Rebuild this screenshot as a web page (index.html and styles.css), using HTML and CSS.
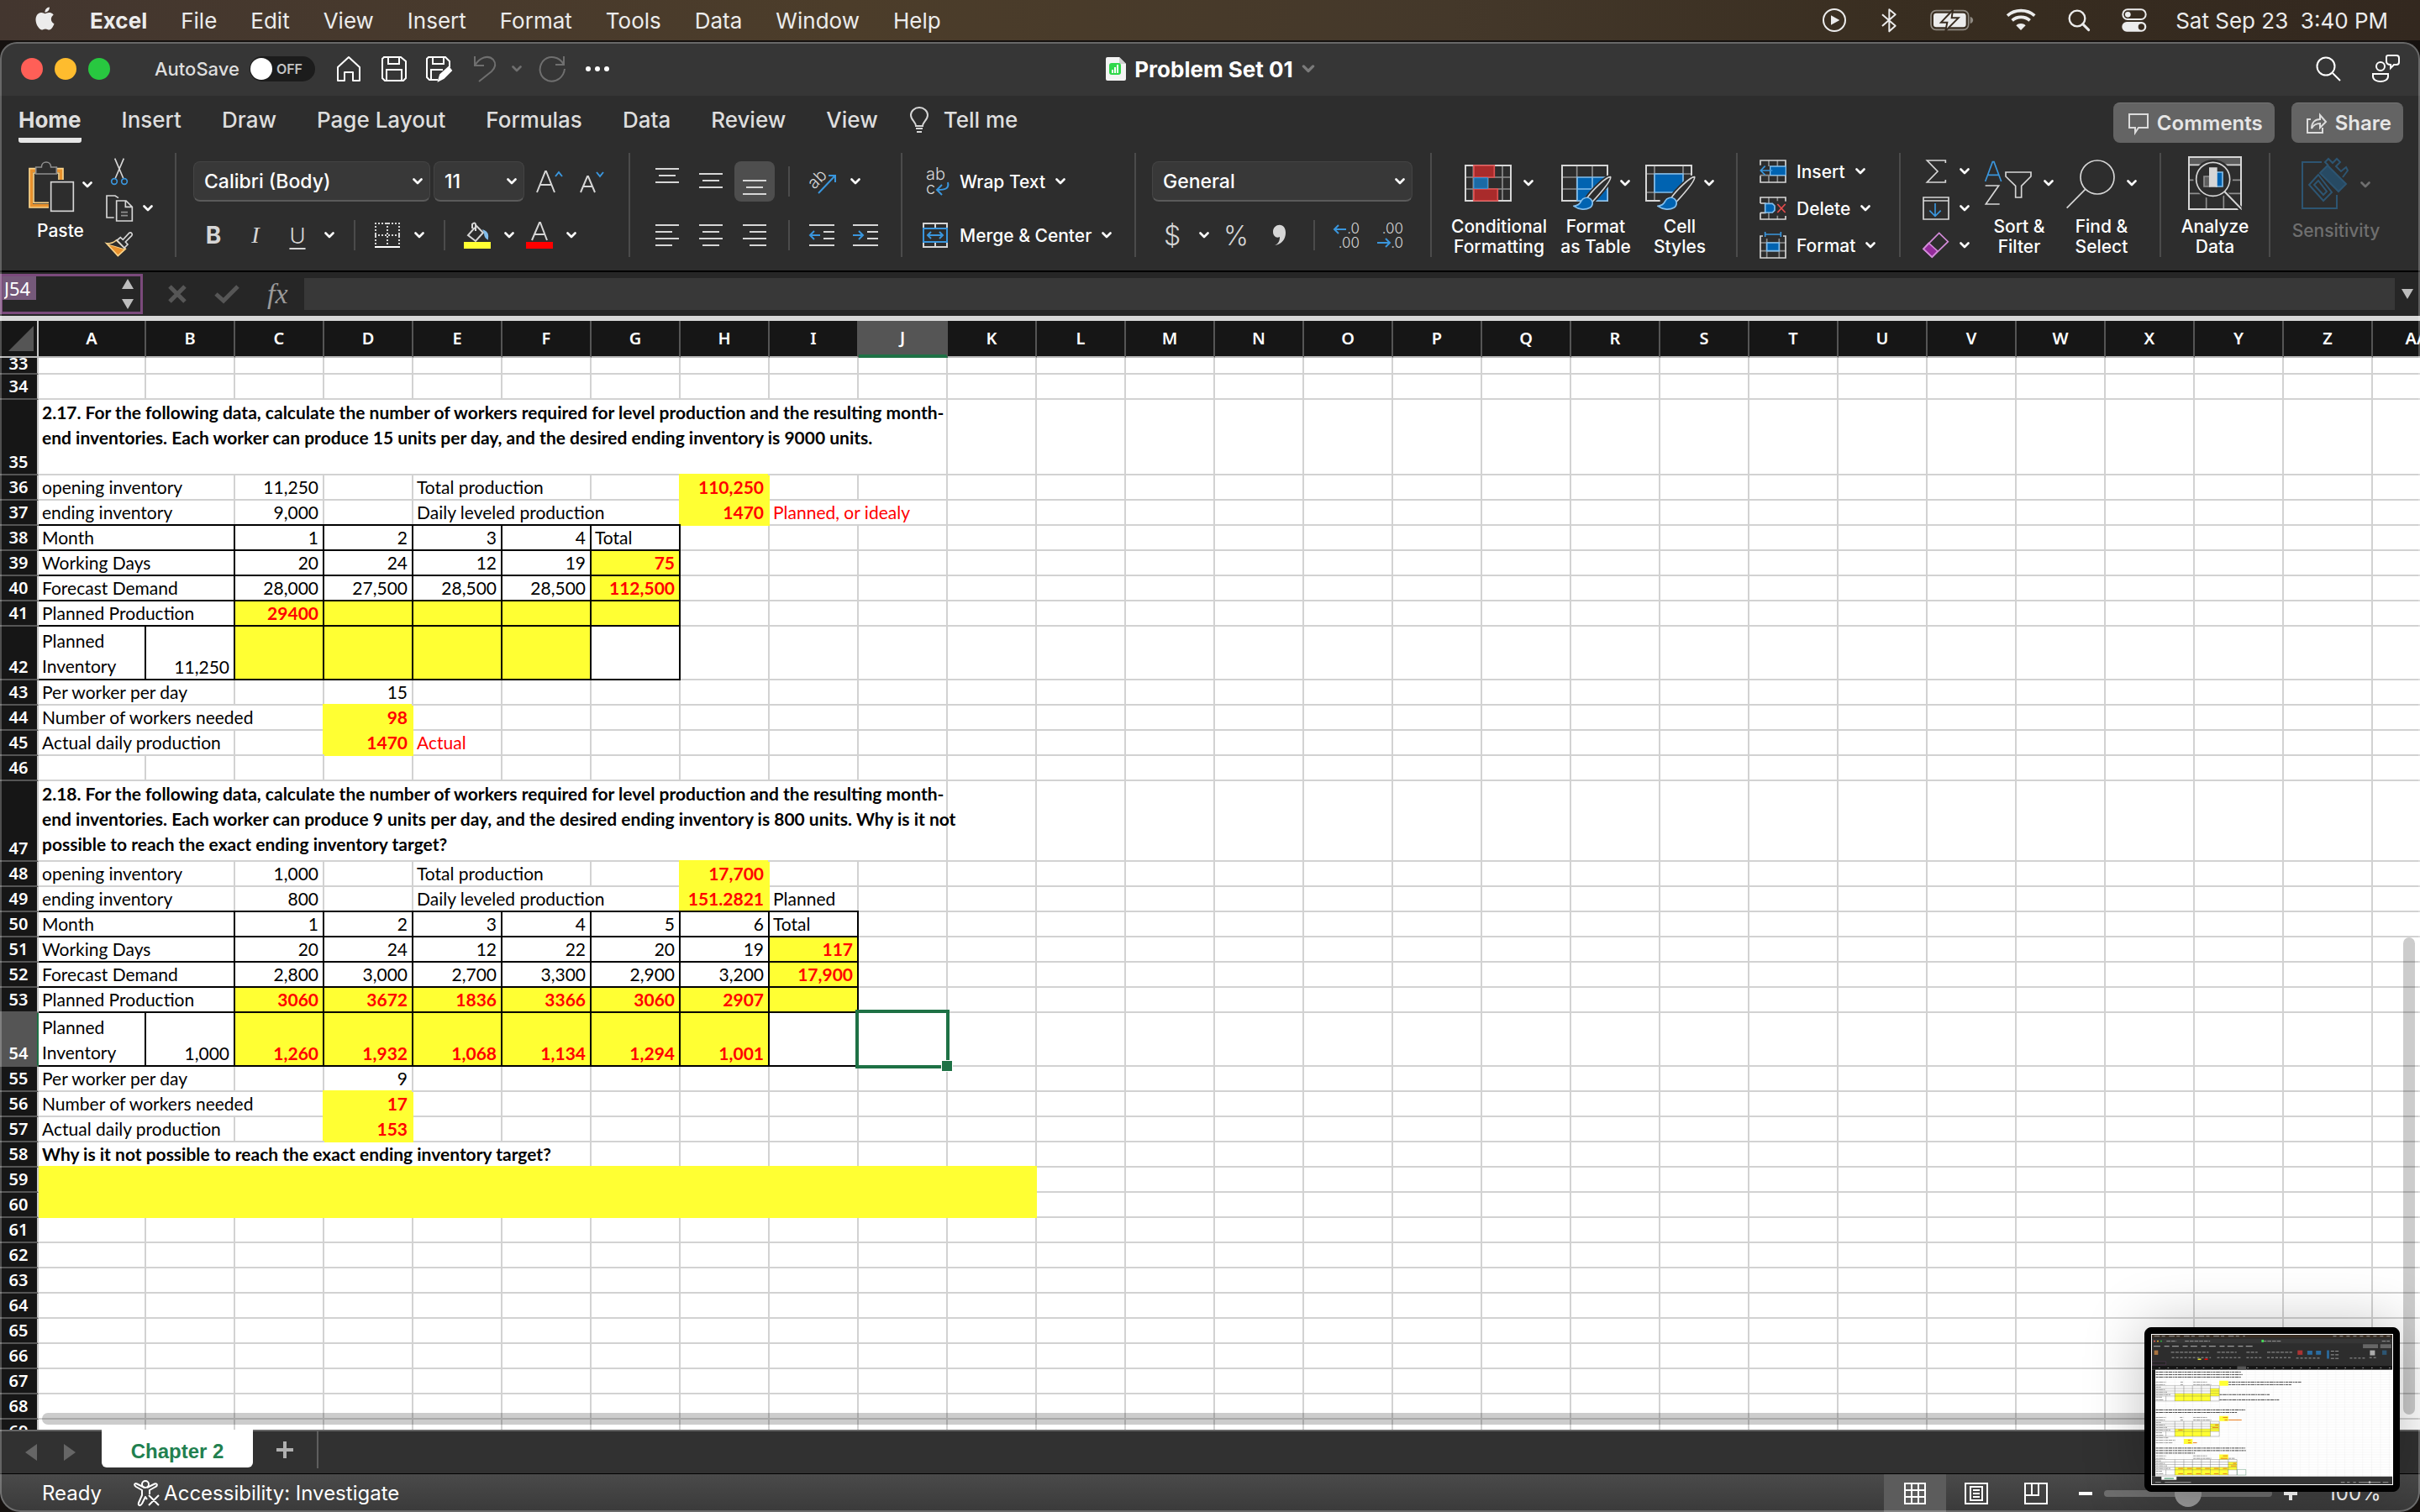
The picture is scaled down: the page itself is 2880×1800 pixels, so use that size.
FILE: index.html
```html
<!DOCTYPE html>
<html lang="en">
<head>
    <meta charset="UTF-8">
    <meta name="viewport" content="width=device-width, initial-scale=1.0">
    <title>Problem Set 01</title>
    <link rel="stylesheet" href="styles.css">
</head>
<body>
    <svg class="defs" aria-hidden="true">
        <symbol id="chev" viewBox="0 0 12 8"><path d="M1.5 1.5 6 6 10.500 1.500" fill="none" stroke="currentColor" stroke-width="2.600" stroke-linecap="round" stroke-linejoin="round"/></symbol>
        <symbol id="brush" viewBox="456 90 140 130">
            <path d="M590 98c-14-2-66 48-84 76l18 14c22-24 70-76 66-90z" fill="#2d2d2d" stroke="#2d2d2d" stroke-width="16"/>
            <path d="M590 98c-14-2-66 48-84 76l18 14c22-24 70-76 66-90z" fill="#2d2d2d" stroke="#d6d6d6" stroke-width="5"/>
            <path d="M459 202c14-2 22-8 26-18 6-12 22-16 33-8 11 9 10 24-2 32-14 8-38 8-57-6z" fill="#0063b1" stroke="#83beec" stroke-width="5"/>
        </symbol>
    </svg>

    <!-- macOS menu bar -->
    <header class="menubar">
        <nav class="menus">
            <a href="#" aria-label="Apple"><svg class="apple" viewBox="0 0 24 24" fill="#ececec"><path d="M12.152 6.896c-.948 0-2.415-1.078-3.96-1.040-2.040.027-3.910 1.183-4.961 3.014-2.117 3.675-.546 9.103 1.519 12.090 1.013 1.454 2.208 3.090 3.792 3.039 1.520-.065 2.090-.987 3.935-.987 1.831 0 2.350.987 3.960.948 1.637-.026 2.676-1.480 3.676-2.948 1.156-1.688 1.636-3.325 1.662-3.415-.039-.013-3.182-1.221-3.220-4.857-.026-3.040 2.480-4.494 2.597-4.559-1.429-2.090-3.623-2.324-4.390-2.376-2-.156-3.675 1.090-4.610 1.090zM15.530 3.830c.843-1.012 1.400-2.427 1.245-3.830-1.207.052-2.662.805-3.532 1.818-.780.896-1.454 2.338-1.273 3.714 1.338.104 2.715-.688 3.559-1.701"/></svg></a>
            <a href="#" class="app">Excel</a>
            <a href="#">File</a>
            <a href="#">Edit</a>
            <a href="#">View</a>
            <a href="#">Insert</a>
            <a href="#">Format</a>
            <a href="#">Tools</a>
            <a href="#">Data</a>
            <a href="#">Window</a>
            <a href="#">Help</a>
        </nav>
        <div class="tray">
            <svg width="28" height="28" viewBox="36 30 84 84"><circle cx="78" cy="72" r="39" fill="none" stroke="#ececec" stroke-width="6"/><path d="M66 55v34l31-17z" fill="#ececec"/></svg>
            <svg width="18" height="30" viewBox="247 27 54 90"><path d="M250 52l47 40-22 20V34l22 18-47 41" fill="none" stroke="#ececec" stroke-width="6" stroke-linejoin="round"/></svg>
            <svg width="52" height="26" viewBox="419 33 156 78"><rect x="422" y="38" width="134" height="68" rx="18" fill="none" stroke="#8f8a82" stroke-width="5"/><path d="M562 60c14 2 14 22 0 24z" fill="#8f8a82"/><rect x="431" y="47" width="116" height="50" rx="10" fill="#ececec"/><path d="M500 36l-42 44h22l-6 30 46-46h-24z" fill="#ececec" stroke="#382c20" stroke-width="6"/></svg>
            <svg width="36" height="28" viewBox="684 30 108 84" fill="none" stroke="#ececec" stroke-width="11"><path d="M690 56c27-24 70-24 97 0"/><path d="M707 73c17-16 46-16 63 0"/><path d="M738 108l-17-17c9-9 25-9 34 0z" fill="#ececec" stroke="none"/></svg>
            <svg width="26" height="26" viewBox="907 34 78 78" fill="none" stroke="#ececec" stroke-width="7"><circle cx="940" cy="67" r="28"/><path d="M960 87l21 21" stroke-width="9" stroke-linecap="round"/></svg>
            <svg width="30" height="28" viewBox="1102 28 90 84"><rect x="1106" y="32" width="82" height="35" rx="17" fill="none" stroke="#ececec" stroke-width="6"/><circle cx="1124" cy="50" r="10" fill="#ececec"/><rect x="1103" y="76" width="87" height="35" rx="17" fill="#ececec"/><circle cx="1172" cy="94" r="11" fill="#382c20"/></svg>
            <span class="clock">Sat Sep 23&nbsp; 3:40 PM</span>
        </div>
    </header>

    <main class="window">
        <div class="titlebar">
            <div class="title-left">
                <span class="light red"></span>
                <span class="light amber"></span>
                <span class="light green"></span>
                <label class="autosave">AutoSave
                    <span class="switch"><input type="checkbox"><span class="knob"></span>OFF</span>
                </label>
                <button aria-label="Home"><svg width="30" height="32" viewBox="0 0 30 32" fill="none" stroke="#fff" stroke-width="2"><path d="M2 14 15 2l13 12v16h-8V20H10v10H2z" stroke-linejoin="round"/></svg></button>
                <button aria-label="Save"><svg width="30" height="30" viewBox="0 0 30 30" fill="none" stroke="#fff" stroke-width="2"><path d="M3 1h20l6 5v20l-3 3H4l-3-3V3z"/><path d="M8 1v8h13V1M6 29V16h18v13"/></svg></button>
                <button aria-label="Save as"><svg width="31" height="30" viewBox="0 0 31 30" fill="none" stroke="#fff" stroke-width="2"><path d="M14 28H4l-3-3V3l2-2h20l5 5v7"/><path d="M8 1v8h13V1M6 28V16h14"/><path d="M15 29l2-7L27 13l3 4-9 9z" fill="#fff"/></svg></button>
                <button aria-label="Undo" class="off"><svg width="28" height="32" viewBox="0 0 28 32" fill="none" stroke="#6f6f6f" stroke-width="2"><path d="M2 1v11h11M2 12C8 2 18-1 24 5c4 5 2 10-2 14L7 31"/></svg></button>
                <button aria-label="Undo list" class="off narrow"><svg width="12" height="8"><use href="#chev"/></svg></button>
                <button aria-label="Redo" class="off"><svg width="32" height="32" viewBox="0 0 32 32" fill="none" stroke="#6f6f6f" stroke-width="2"><path d="M30 1v10H20M30 11C25 1 12-1 5 7-1 15 1 26 11 30c11 3 19-5 20-14"/></svg></button>
                <button aria-label="More"><svg width="28" height="6" viewBox="0 0 28 6" fill="#fff"><circle cx="3" cy="3" r="3"/><circle cx="14" cy="3" r="3"/><circle cx="25" cy="3" r="3"/></svg></button>
            </div>
            <h1 class="title">
                <svg width="24" height="28" viewBox="0 0 24 28"><path d="M2 0h14l8 8v18q0 2-2 2H2q-2 0-2-2V2q0-2 2-2z" fill="#f4f4f4"/><path d="M16 0l8 8h-8z" fill="#cfcfcf"/><rect x="4" y="7" width="14" height="14" rx="3" fill="#2fd84a"/><path d="M8 19v-4M11 19v-7M14 19V9" stroke="#fff" stroke-width="2"/></svg>
                Problem Set 01
                <svg class="dim" width="16" height="10"><use href="#chev"/></svg>
            </h1>
            <div class="title-right">
                <button aria-label="Search"><svg width="30" height="30" viewBox="0 0 30 30" fill="none" stroke="#fff" stroke-width="2"><circle cx="12" cy="12" r="10.500"/><path d="M20 20l9 9"/></svg></button>
                <button aria-label="Presence"><svg width="34" height="34" viewBox="0 0 34 34" fill="none" stroke="#fff" stroke-width="2"><circle cx="11" cy="14" r="5"/><path d="M2 23h18v3c0 8-18 8-18 0z"/><path d="M18 3q0-2 2-2h10q3 0 3 3v5q0 3-3 3h-3l-4 4v-4q-5 0-5-4z"/></svg></button>
            </div>
        </div>

        <div class="tabs">
            <nav>
                <a href="#" class="active">Home</a>
                <a href="#">Insert</a>
                <a href="#">Draw</a>
                <a href="#">Page Layout</a>
                <a href="#">Formulas</a>
                <a href="#">Data</a>
                <a href="#">Review</a>
                <a href="#">View</a>
                <a href="#" class="tell"><svg width="22" height="32" viewBox="0 0 22 32" fill="none" stroke="#d6d6d6" stroke-width="2"><path d="M7 23c0-5-6-7-6-13a10 9 0 0 1 20 0c0 6-6 8-6 13zM7 26h8M8 30h6"/></svg>Tell me</a>
            </nav>
            <button class="pill"><svg width="24" height="24" viewBox="0 0 24 24" fill="none" stroke="#dcdcdc" stroke-width="2"><path d="M1 1h22v16H12l-4 6v-6H1z"/></svg>Comments</button>
            <button class="pill"><svg width="24" height="24" viewBox="0 0 24 24" fill="none" stroke="#dcdcdc" stroke-width="2"><path d="M5 7H1v16h18v-6M6 18c0-7 4-11 10-11V2l7 8-7 7v-5c-5 0-8 2-10 6z"/></svg>Share</button>
        </div>

        <div class="ribbon">
            <section class="group clipboard">
                <button class="big">
                    <span class="big-top">
                        <svg width="56" height="64" viewBox="102 24 168 192" fill="none"><path d="M174 195h-63V69h108v33" stroke="#e8912d" stroke-width="12"/><path d="M174 201h-69V62h120v40M174 184h-54V78h90v24" stroke="#fbd58c" stroke-width="5"/><path d="M128 57h20c0-24 34-24 34 0h20v24h-74z" fill="#2d2d2d" stroke="#8f8f8f" stroke-width="5"/><rect x="182" y="110" width="80" height="104" fill="#2d2d2d" stroke="#d6d6d6" stroke-width="5"/></svg>
                        <svg width="12" height="8"><use href="#chev"/></svg>
                    </span>
                    Paste
                </button>
                <div class="stack">
                    <button class="small" aria-label="Cut"><svg width="32" height="32" viewBox="378 24 96 96" fill="none" stroke-width="5"><path d="M410 26l30 70M442 26l-30 70" stroke="#d6d6d6"/><circle cx="408" cy="108" r="10" stroke="#3a96dd"/><circle cx="444" cy="108" r="10" stroke="#3a96dd"/></svg></button>
                    <button class="small" aria-label="Copy"><svg width="32" height="32" viewBox="378 156 96 96" fill="none" stroke="#d6d6d6" stroke-width="5"><path d="M407 237h-26v-78h30l12 8"/><path d="M416 177h34l22 22v50h-56zM448 177v22h24"/><path d="M432 218h24M432 230h24" stroke="#8f8f8f"/></svg><svg width="12" height="8"><use href="#chev"/></svg></button>
                    <button class="small" aria-label="Format painter"><svg width="32" height="32" viewBox="378 288 96 96" fill="none" stroke-width="5"><path d="M381 330l40 44 26-24z" fill="#e8912d" stroke="#fbd58c"/><path d="M381 330c16 0 26-4 34-12l34 32" fill="#2d2d2d" stroke="#fbd58c"/><path d="M418 318l12-10 9 8 22-24c8-4 14 4 9 10l-22 22 8 9-12 12z" fill="#2d2d2d" stroke="#d6d6d6"/></svg></button>
                </div>
            </section>

            <section class="group rows font">
                <div class="row">
                    <label class="select wide"><select aria-label="Font"><option>Calibri (Body)</option></select><svg width="12" height="8"><use href="#chev"/></svg></label>
                    <label class="select tiny"><select aria-label="Font size"><option>11</option></select><svg width="12" height="8"><use href="#chev"/></svg></label>
                    <button class="sq" aria-label="Increase font size"><svg width="32" height="30" viewBox="0 0 32 30" fill="none" stroke="#d6d6d6" stroke-width="2"><path d="M1 28 11 3h1l10 25M5 19h13"/><path d="M23 9l4-5 4 5" stroke="#3a96dd"/></svg></button>
                    <button class="sq" aria-label="Decrease font size"><svg width="32" height="30" viewBox="0 0 32 30" fill="none" stroke="#d6d6d6" stroke-width="2"><path d="M3 28l8-19h1l8 19M6 21h11"/><path d="M22 4l4 5 4-5" stroke="#3a96dd"/></svg></button>
                </div>
                <div class="row">
                    <button class="sq bold">B</button>
                    <button class="sq italic">I</button>
                    <button class="sq underline">U</button>
                    <button class="arrow" aria-label="Underline style"><svg width="12" height="8"><use href="#chev"/></svg></button>
                    <i class="vr"></i>
                    <button class="sq" aria-label="Borders"><svg width="30" height="30" viewBox="0 0 30 30" fill="none" stroke="#d6d6d6" stroke-width="2"><path d="M0 1h30M1 0v26M29 0v26M15 0v26M0 15h30" stroke-dasharray="2 2"/><path d="M0 29h30" stroke="#fff"/></svg></button>
                    <button class="arrow" aria-label="Border list"><svg width="12" height="8"><use href="#chev"/></svg></button>
                    <i class="vr"></i>
                    <button class="sq" aria-label="Fill color"><svg width="32" height="32" viewBox="0 0 32 32" fill="none" stroke="#d6d6d6" stroke-width="2"><path d="M13 7L5 16l9 7 9-10-9-9M14 11V3q-1-3-4 0v5"/><path d="M24 11q5 2 4 9-3-2-3-7z" fill="#83beec" stroke="#83beec"/><path d="M0 28h32" stroke="#ff3" stroke-width="8"/></svg></button>
                    <button class="arrow" aria-label="Fill colors"><svg width="12" height="8"><use href="#chev"/></svg></button>
                    <button class="sq" aria-label="Font color"><svg width="32" height="32" viewBox="0 0 32 32" fill="none" stroke="#d6d6d6" stroke-width="2"><path d="M7 22l9-21h1l8 21M10 15h12"/><path d="M0 28h32" stroke="#f00" stroke-width="8"/></svg></button>
                    <button class="arrow" aria-label="Font colors"><svg width="12" height="8"><use href="#chev"/></svg></button>
                </div>
            </section>

            <section class="group rows align">
                <div class="row">
                    <button class="sq" aria-label="Top align"><svg width="28" height="32" viewBox="0 0 28 32" stroke="#d6d6d6" stroke-width="2"><path d="M0 1h28M4 9h20M0 17h28"/></svg></button>
                    <button class="sq" aria-label="Middle align"><svg width="28" height="32" viewBox="0 0 28 32" stroke="#d6d6d6" stroke-width="2"><path d="M0 7h28M4 15h20M0 23h28"/></svg></button>
                    <button class="sq on" aria-label="Bottom align"><svg width="28" height="32" viewBox="0 0 28 32" stroke="#d6d6d6" stroke-width="2"><path d="M0 15h28M4 23h20M0 31h28"/></svg></button>
                    <i class="vr"></i>
                    <button class="sq" aria-label="Orientation"><svg width="34" height="32" viewBox="0 0 34 32"><text x="0" y="21" transform="rotate(-45 10 14)" class="glyph">ab</text><path d="M13 30 33 9M25 9h8v8" fill="none" stroke="#3a96dd" stroke-width="2"/></svg></button>
                    <button class="arrow" aria-label="Orientation list"><svg width="12" height="8"><use href="#chev"/></svg></button>
                </div>
                <div class="row">
                    <button class="sq" aria-label="Align left"><svg width="28" height="26" viewBox="0 0 28 26" stroke="#d6d6d6" stroke-width="2"><path d="M0 1h28M0 9h20M0 17h28M0 25h20"/></svg></button>
                    <button class="sq" aria-label="Center"><svg width="28" height="26" viewBox="0 0 28 26" stroke="#d6d6d6" stroke-width="2"><path d="M0 1h28M4 9h20M0 17h28M4 25h20"/></svg></button>
                    <button class="sq" aria-label="Align right"><svg width="28" height="26" viewBox="0 0 28 26" stroke="#d6d6d6" stroke-width="2"><path d="M0 1h28M8 9h20M0 17h28M8 25h20"/></svg></button>
                    <i class="vr"></i>
                    <button class="sq" aria-label="Decrease indent"><svg width="30" height="26" viewBox="0 0 30 26" fill="none" stroke="#d6d6d6" stroke-width="2"><path d="M0 1h30M17 9h13M17 17h13M0 25h30"/><path d="M13 13H1M6 8l-5 5 5 5" stroke="#3a96dd"/></svg></button>
                    <button class="sq" aria-label="Increase indent"><svg width="30" height="26" viewBox="0 0 30 26" fill="none" stroke="#d6d6d6" stroke-width="2"><path d="M0 1h30M17 9h13M17 17h13M0 25h30"/><path d="M0 13h12M7 8l5 5-5 5" stroke="#3a96dd"/></svg></button>
                </div>
            </section>

            <section class="group rows merge">
                <button class="row line">
                    <svg width="30" height="34" viewBox="0 0 30 34"><text class="glyph"><tspan x="4" y="15">ab</tspan><tspan x="4" y="32">c</tspan></text><path d="M30 18c2 8-4 9-12 9M23 21l-6 6 6 6" fill="none" stroke="#3a96dd" stroke-width="2"/></svg>
                    Wrap Text <svg width="12" height="8"><use href="#chev"/></svg>
                </button>
                <button class="row line">
                    <svg width="30" height="30" viewBox="0 0 30 30" fill="none" stroke="#d6d6d6" stroke-width="2"><path d="M1 7V1h28v6M15 1v6M1 23v6h28v-6M15 23v6"/><path d="M1 7h28v16H1zM6 15h18M10 11l-4 4 4 4M20 11l4 4-4 4" stroke="#3a96dd"/></svg>
                    Merge &amp; Center <svg width="12" height="8"><use href="#chev"/></svg>
                </button>
            </section>

            <section class="group rows number">
                <div class="row">
                    <label class="select fmt"><select aria-label="Number format"><option>General</option></select><svg width="12" height="8"><use href="#chev"/></svg></label>
                </div>
                <div class="row">
                    <button class="sq sign">$</button>
                    <button class="arrow" aria-label="Currencies"><svg width="12" height="8"><use href="#chev"/></svg></button>
                    <button class="sq sign">%</button>
                    <button class="sq" aria-label="Comma style"><svg width="16" height="26" viewBox="0 0 16 26" fill="#d6d6d6"><path d="M2 25c5-2 6-6 6-10-4 2-8-1-8-6 0-10 15-12 15 1 0 8-5 14-13 15z"/></svg></button>
                    <i class="vr"></i>
                    <button class="sq" aria-label="Increase decimal"><svg width="32" height="32" viewBox="0 0 32 32"><text class="digits"><tspan x="31" y="14">.0</tspan><tspan x="31" y="31">.00</tspan></text><path d="M15 9H1M6 4L1 9l5 5" fill="none" stroke="#3a96dd" stroke-width="2"/></svg></button>
                    <button class="sq" aria-label="Decrease decimal"><svg width="32" height="32" viewBox="0 0 32 32"><text class="digits"><tspan x="31" y="14">.00</tspan><tspan x="31" y="31">.0</tspan></text><path d="M0 25h15M10 20l5 5-5 5" fill="none" stroke="#3a96dd" stroke-width="2"/></svg></button>
                </div>
            </section>

            <section class="group styles">
                <button class="big w120">
                    <span class="big-top">
                        <svg width="56" height="64" viewBox="69 24 168 192" fill="none"><path d="M100 56v128M152 56v128M204 56v128M72 99h162M72 141h162" stroke="#8f8f8f" stroke-width="5"/><rect x="72" y="57" width="162" height="126" stroke="#d6d6d6" stroke-width="6"/><path d="M102 57h73v42h-73zM102 141h85v42h-85z" fill="#a92b2b" stroke="#e05252" stroke-width="5"/><path d="M102 101h49v38h-49z" fill="#1b6aa5" stroke="#3a96dd" stroke-width="3"/></svg>
                        <svg width="12" height="8"><use href="#chev"/></svg>
                    </span>
                    Conditional<br>Formatting
                </button>
                <button class="big w110">
                    <span class="big-top">
                        <svg width="56" height="64" viewBox="414 24 168 192" fill="none"><path d="M470 56v128M525 56v42M416 99h56M416 141h56" stroke="#8f8f8f" stroke-width="5"/><rect x="417" y="57" width="162" height="126" stroke="#d6d6d6" stroke-width="6"/><path d="M471 99h108v84H471z" fill="#0063b1" stroke="#83beec" stroke-width="5"/><path d="M525 99v84M471 141h108" stroke="#83beec" stroke-width="5"/><use href="#brush" x="456" y="90" width="140" height="130"/></svg>
                        <svg width="12" height="8"><use href="#chev"/></svg>
                    </span>
                    Format<br>as Table
                </button>
                <button class="big w90">
                    <span class="big-top">
                        <svg width="56" height="64" viewBox="714 24 168 192" fill="none"><path d="M747 56v128M849 56v30M716 87h162M716 153h34" stroke="#8f8f8f" stroke-width="5"/><path d="M879 95V57H717v126h50" stroke="#d6d6d6" stroke-width="6"/><path d="M747 87h102v66H747z" fill="#0063b1" stroke="#83beec" stroke-width="5"/><use href="#brush" x="756" y="90" width="140" height="130"/></svg>
                        <svg width="12" height="8"><use href="#chev"/></svg>
                    </span>
                    Cell<br>Styles
                </button>
            </section>

            <section class="group cells">
                <div class="stack">
                    <button class="small text"><svg width="32" height="32" viewBox="1122 24 96 96" fill="none" stroke-width="5"><path d="M1155 32v22M1186 32v80M1155 86v26M1124 86h92" stroke="#8f8f8f"/><path d="M1125 50V33h90v78h-90V88" stroke="#d6d6d6"/><path d="M1160 54h56v32h-56z" fill="#0063b1" stroke="#83beec" stroke-width="4"/><path d="M1168 69h-42M1142 53l-16 16 16 16" stroke="#3a96dd"/></svg>Insert <svg width="12" height="8"><use href="#chev"/></svg></button>
                    <button class="small text"><svg width="32" height="32" viewBox="1122 156 96 96" fill="none" stroke-width="5"><path d="M1155 164v22M1186 164v14M1155 218v26M1186 230v14" stroke="#8f8f8f"/><path d="M1125 186v-21h90v14M1125 186h20M1125 220h20M1125 220v23h90v-12" stroke="#d6d6d6"/><path d="M1142 187h26l8 8v16l-8 8h-26z" fill="#0063b1" stroke="#83beec"/><path d="M1186 189l28 30M1214 189l-28 30" stroke="#e84c4c"/></svg>Delete <svg width="12" height="8"><use href="#chev"/></svg></button>
                    <button class="small text"><svg width="32" height="32" viewBox="1122 288 96 96" fill="none" stroke-width="5"><path d="M1148 312v70M1192 312v70M1124 327h92M1124 356h92" stroke="#8f8f8f"/><path d="M1134 303h-9v78h90v-78h-9" stroke="#d6d6d6"/><path d="M1148 327h44v29h-44z" fill="#0063b1" stroke="#83beec"/><path d="M1142 297h56M1142 288v18M1198 288v18" stroke="#3a96dd"/></svg>Format <svg width="12" height="8"><use href="#chev"/></svg></button>
                </div>
            </section>

            <section class="group editing">
                <div class="stack">
                    <button class="small" aria-label="AutoSum"><svg width="32" height="32" viewBox="144 24 96 96" fill="none" stroke="#d6d6d6" stroke-width="5"><path d="M226 42v-9h-66l38 39-38 39h66v-9"/></svg><svg width="12" height="8"><use href="#chev"/></svg></button>
                    <button class="small" aria-label="Fill"><svg width="32" height="32" viewBox="144 156 96 96" fill="none" stroke="#d6d6d6" stroke-width="5"><path d="M147 165h90v78h-90zM147 177h90"/><path d="M189 186v46M169 212l20 20 20-20" stroke="#3a96dd"/></svg><svg width="12" height="8"><use href="#chev"/></svg></button>
                    <button class="small" aria-label="Clear"><svg width="32" height="32" viewBox="144 288 96 96" fill="none" stroke="#d28ad8" stroke-width="5"><path d="M166 328l-19 21 31 29 20-21z" fill="#952c9c"/><path d="M203 292l32 31-57 55-31-29z"/></svg><svg width="12" height="8"><use href="#chev"/></svg></button>
                </div>
                <button class="big w106">
                    <span class="big-top">
                        <svg width="56" height="64" viewBox="366 24 168 192" fill="none" stroke="#d6d6d6" stroke-width="5"><path d="M368 114l26-70h5l26 70M377 91h39" stroke="#3a96dd"/><path d="M368 129h48l-46 66h49"/><path d="M441 81h90v15l-34 34v41h-21v-41l-35-34z"/></svg>
                        <svg width="12" height="8"><use href="#chev"/></svg>
                    </span>
                    Sort &amp;<br>Filter
                </button>
                <button class="big w90">
                    <span class="big-top">
                        <svg width="58" height="64" viewBox="660 24 174 192" fill="none" stroke="#d6d6d6" stroke-width="5"><circle cx="771" cy="99" r="60"/><path d="M728 142l-66 67"/></svg>
                        <svg width="12" height="8"><use href="#chev"/></svg>
                    </span>
                    Find &amp;<br>Select
                </button>
            </section>

            <section class="group analyze">
                <button class="big">
                    <span class="big-top">
                        <svg width="64" height="64" viewBox="1092 24 192 192" fill="none"><path d="M1094 26h188v28h-188z" fill="#5c5c5c"/><path d="M1094 109h188M1094 157h188M1157 157v56M1219 157v56" stroke="#8f8f8f" stroke-width="5"/><path d="M1094 55h188" stroke="#d6d6d6" stroke-width="5"/><rect x="1095" y="27" width="186" height="186" stroke="#d6d6d6" stroke-width="6"/><circle cx="1181" cy="106" r="60" fill="#2d2d2d" stroke="#2d2d2d" stroke-width="20"/><path d="M1220 150l62 64" stroke="#2d2d2d" stroke-width="16"/><circle cx="1181" cy="106" r="60" stroke="#d6d6d6" stroke-width="5"/><path d="M1222 150l60 62" stroke="#d6d6d6" stroke-width="6"/><path d="M1149 96h20v36h-20z" fill="#5c5c5c" stroke="#8f8f8f" stroke-width="5"/><path d="M1193 81h22v51h-22z" fill="#0063b1" stroke="#83beec" stroke-width="5"/><path d="M1167 64h29v70h-29z" fill="#d6d6d6"/></svg>
                    </span>
                    Analyze<br>Data
                </button>
            </section>

            <section class="group sensitivity">
                <button class="big off" disabled>
                    <span class="big-top">
                        <svg width="56" height="64" viewBox="0 0 56 64" fill="none" stroke="#2d5572" stroke-width="2"><path d="M24 5H1v55h41V44"/><path d="M20 20l-11 12 17 19 10-10z"/><path d="M20 27l-5 5 11 12 4-4z"/><path d="M22 18l9-9 22 22-9 9z" fill="#274a63"/><path d="M32 9l-4-4 4-4 5 5 5-5 4 4-5 5 6 6 6-5 2 4-6 8"/></svg>
                        <svg width="12" height="8"><use href="#chev"/></svg>
                    </span>
                    Sensitivity
                </button>
            </section>
        </div>

        <div class="formula-bar">
            <div class="namebox">
                <input type="text" value="J54" aria-label="Name box">
                <svg width="16" height="38" viewBox="0 0 16 38" fill="#bdbdbd"><path d="M1 13 8 1l7 12zM1 25h14L8 37z"/></svg>
            </div>
            <button aria-label="Cancel"><svg width="22" height="22" viewBox="0 0 22 22" stroke="#565656" stroke-width="5"><path d="M2 2l18 18M20 2 2 20"/></svg></button>
            <button aria-label="Enter"><svg width="30" height="22" viewBox="0 0 30 22" fill="none" stroke="#565656" stroke-width="5"><path d="M2 11l9 8L28 2"/></svg></button>
            <span class="fx">fx</span>
            <input type="text" class="formula" aria-label="Formula">
            <button class="expand" aria-label="Expand formula bar"><svg width="14" height="12" viewBox="0 0 14 12" fill="#bdbdbd"><path d="M0 0h14L7 12z"/></svg></button>
        </div>

        <div class="sheet">
            <table id="grid"></table>
            <div class="hscroll"></div>
            <div class="vscroll"></div>
        </div>

        <div class="sheet-tabs">
            <button aria-label="Previous sheet"><svg width="14" height="20" viewBox="0 0 14 20" fill="#666"><path d="M14 0v20L0 10z"/></svg></button>
            <button aria-label="Next sheet"><svg width="14" height="20" viewBox="0 0 14 20" fill="#666"><path d="M0 0v20l14-10z"/></svg></button>
            <a href="#" class="sheet-tab">Chapter 2</a>
            <button class="add" aria-label="Add sheet"><svg width="20" height="20" viewBox="0 0 20 20" stroke="#b0b0b0" stroke-width="4"><path d="M10 0v20M0 10h20"/></svg></button>
        </div>

        <footer class="status">
            <span>Ready</span>
            <a href="#" class="access"><svg width="32" height="32" viewBox="0 0 32 32" fill="none" stroke="#fff" stroke-width="2"><circle cx="14" cy="5" r="4"/><path d="M13 9 4 4.500C1 3 0 6 3 8l7 4v6L6 27c-1 4 2 4 4 1l4-8 2 3M16 9l9-4.500c3-1 4 2 1 3.500l-7 4v5M18 18l12 12M30 18 18 30" stroke-linejoin="round"/></svg>Accessibility: Investigate</a>
            <div class="views">
                <button class="on" aria-label="Normal view"><svg width="26" height="26" viewBox="0 0 26 26" fill="none" stroke="#fff" stroke-width="2"><path d="M1 1h24v24H1zM9 1v24M17 1v24M1 9h24M1 17h24"/></svg></button>
                <button aria-label="Page layout view"><svg width="28" height="26" viewBox="0 0 28 26" fill="none" stroke="#fff" stroke-width="2"><path d="M1 1h26v24H1zM7 5h14v16H7zM10 9h8M10 13h8M10 17h8"/></svg></button>
                <button aria-label="Page break view"><svg width="28" height="26" viewBox="0 0 28 26" fill="none" stroke="#fff" stroke-width="2"><path d="M1 1h26v24H1zM9 1v14M17 1v14M1 15h17"/></svg></button>
            </div>
            <button class="minus" aria-label="Zoom out"><svg width="16" height="4" viewBox="0 0 16 4" fill="#fff"><path d="M0 0h16v4H0z"/></svg></button>
            <input type="range" min="0" max="100" value="50" aria-label="Zoom">
            <button class="plus" aria-label="Zoom in"><svg width="16" height="16" viewBox="0 0 16 16" stroke="#fff" stroke-width="4"><path d="M8 0v16M0 8h16"/></svg></button>
            <span class="percent">100%</span>
        </footer>
    </main>

    <!-- floating preview of the last screen capture -->
    <div class="capture">
        <svg viewBox="182 116 860 537" preserveAspectRatio="none">
            <rect x="182" y="116" width="860" height="537" fill="#fff"/>
            <rect x="182" y="116" width="860" height="125" fill="#2d2d2d"/>
            <rect x="182" y="116" width="860" height="10" fill="#3a2e22"/>
            <rect x="182" y="131" width="860" height="16" fill="#363636"/>
            <rect x="182" y="228" width="860" height="13" fill="#151515"/>
            <rect x="182" y="241" width="12" height="384" fill="#151515"/>
            <g id="captureGrid"></g>
            <g fill="none" stroke="#999" stroke-width="3">
                <path d="M190 121h325" stroke-dasharray="20 7 12 14"/>
                <path d="M830 121h205" stroke-dasharray="12 12"/>
                <path d="M234 139h36M300 139h90M578 139h68M1005 139h28" stroke-dasharray="14 3"/>
                <path d="M188 157h360" stroke-dasharray="24 14 18 10" stroke-width="4"/>
                <path d="M250 179h135M415 179h70M520 179h40M594 179h90M822 175h30M822 188h30M822 201h30" stroke-dasharray="12 4"/>
                <path d="M253 198h140M415 198h85M520 198h58M594 198h90M698 200h90M890 200h55M960 198h30" stroke-dasharray="9 6"/>
                <path d="M206 235h830" stroke="#999" stroke-dasharray="5 26.700"/>
            </g>
            <circle cx="191" cy="139" r="3" fill="#ff5f57"/><circle cx="203" cy="139" r="3" fill="#febc2e"/><circle cx="215" cy="139" r="3" fill="#28c840"/>
            <path d="M574 134h8v9h-8z" fill="#4d5"/>
            <path d="M937 150h54v14h-54zM999 150h39v14h-39z" fill="#666"/>
            <path d="M190 172h14v16h-14z" fill="#a87440"/>
            <path d="M703 172h18v16h-18z" fill="#a33"/><path d="M738 173h18v15h-18zM769 173h18v15h-18zM808 172h8v30h-8z" fill="#2a6ca0"/>
            <path d="M962 172h18v18h-18z" fill="#aaa"/><path d="M1006 172h16v16h-16z" fill="#2d5572"/>
            <path d="M346 202h12v4h-12z" fill="#ff3"/><path d="M370 202h12v4h-12z" fill="#f00"/>
            <path d="M182 212h50v12h-50z" fill="#262626" stroke="#7b4a7c"/><path d="M487 229h32v12h-32z" fill="#555"/>
            <path d="M423 281h32v18h-32zM391 309h32v18h-32zM264 327h159v9H264zM264 336h127v18H264zM423 408h32v18h-32zM391 436h32v18h-32zM264 454h159v9H264zM264 463h127v18H264zM296 490h31v18h-31zM423 546h32v18h-32zM455 573h31v19h-31zM264 592h222v9H264zM264 601h191v19H264z" fill="#ff3"/>
            <g fill="none" stroke="#555" stroke-width="1">
                <path d="M194 299h229v55H194M194 309h229M194 318h229M194 327h229M194 336h229M264 299v55M296 299v55M327 299v55M359 299v55M391 299v55M232 336v18"/>
                <path d="M194 427h229v54H194M194 436h229M194 445h229M194 454h229M194 463h229M264 427v54M296 427v54M327 427v54M359 427v54M391 427v54M232 463v18"/>
                <path d="M194 564h292v56H194M194 573h292M194 582h292M194 592h292M194 601h292M264 564v56M296 564v56M327 564v56M359 564v56M391 564v56M423 564v56M455 564v56M232 601v19"/>
                <path d="M487 600h31v20h-31z" stroke="#1e7145"/>
            </g>
            <g fill="none" stroke="#444" stroke-width="3" stroke-dasharray="9 2 14 2 5 2">
                <path d="M196 250h305M196 259h310M196 268h304M196 386h320M196 395h290M196 523h320M196 532h322M196 541h140M456 286h260M456 295h225M424 331h180M424 350h213"/>
                <g stroke="#999"><path d="M196 286h36M330 286h49M196 295h34M330 295h64M196 304h18M196 313h34M196 322h40M196 331h52M196 340h22M196 350h28M284 286h10M284 295h10"/><path d="M196 413h36M330 413h49M196 422h34M330 422h64M196 431h18M196 440h34M196 449h40M196 458h52M196 468h22M196 477h28M196 486h46M196 495h70M196 504h60M282 413h12M284 422h10"/><path d="M196 551h36M330 551h49M196 560h34M330 560h64M196 569h18M196 578h34M196 587h40M196 596h52M196 606h22M196 615h28M456 560h22"/></g>
            </g>
            <g fill="none" stroke="#e87a1c" stroke-width="3"><path d="M436 413h17M442 422h11M456 422h47M408 440h12M398 449h22M276 458h16M311 495h9M311 504h12M329 504h14M436 551h17M428 560h25M472 578h11M464 587h20"/><path d="M276 596h175M276 615h175" stroke-dasharray="17 15"/></g>
            <rect x="182" y="625" width="860" height="28" fill="#343434"/><path d="M216 625h54v12h-54z" fill="#fff"/><path d="M226 632h34" stroke="#21804f" stroke-width="3"/>
            <path d="M194 646h20M228 646h94M858 646h14M880 646h10M902 646h10M922 646h78M1008 646h20" stroke="#999" stroke-width="3"/><circle cx="961" cy="646" r="4" fill="#bbb"/>
        </svg>
    </div>

    <script src="grid.js"></script>
</body>
</html>
```
FILE: styles.css
```css
* {
    box-sizing: border-box;
}

body {
    margin: 0;
    height: 100vh;
    display: flex;
    flex-direction: column;
    overflow: hidden;
    background-color: #15110f;
    color: #fff;
    font-family: Inter, "Liberation Sans", sans-serif;
    font-size: 21px;
}

a {
    color: inherit;
    text-decoration: none;
}

button {
    display: flex;
    align-items: center;
    justify-content: center;
    flex: none;
    margin: 0;
    padding: 0;
    border: none;
    background: none;
    color: inherit;
    font: inherit;
}

svg {
    display: block;
    flex: none;
    overflow: visible;
}

.defs {
    position: absolute;
    width: 0;
    height: 0;
}

/* Menu bar */
.menubar {
    flex: none;
    height: 48px;
    padding: 0 38px 0 40px;
    display: flex;
    align-items: center;
    justify-content: space-between;
    background: linear-gradient(90deg, #43362f, #4c3d2a 35%, #44382a 60%, #382d20 80%, #33281f);
    color: #ececec;
    font-size: 26px;
}

.menus {
    display: flex;
    align-items: center;
    gap: 40px;
}

.apple {
    width: 27px;
    height: 32px;
    margin-bottom: 4px;
}

.app {
    font-weight: 700;
}

.tray {
    display: flex;
    align-items: center;
    gap: 38px;
}

.tray svg:first-child {
    margin-right: 4px;
}

.tray svg:nth-child(2) {
    margin-right: 2px;
}

.clock {
    margin-left: -4px;
}

/* Excel window */
.window {
    position: relative;
    flex: 1;
    min-height: 0;
    margin-top: 2px;
    display: flex;
    flex-direction: column;
    overflow: hidden;
    border-radius: 20px 20px 24px 24px;
    background-color: #2d2d2d;
}

.window::after {
    content: "";
    position: absolute;
    inset: 0;
    border: 2px solid rgba(255, 255, 255, 0.25);
    border-radius: inherit;
    pointer-events: none;
}

.titlebar {
    flex: none;
    height: 64px;
    padding: 0 24px 0 25px;
    display: grid;
    grid-template-columns: 1fr auto 1fr;
    align-items: center;
    background-color: #363636;
}

.title-left, .title-right {
    display: flex;
    align-items: center;
}

.title-left button {
    width: 54px;
}

.title-left .narrow {
    width: 22px;
    margin-right: 4px;
}

.off {
    color: #6f6f6f;
}

.title-right {
    justify-content: flex-end;
    gap: 36px;
}

.light {
    width: 26px;
    height: 26px;
    margin-right: 14px;
    border-radius: 50%;
}

.red {
    background-color: #ff5f57;
}

.amber {
    background-color: #febc2e;
}

.green {
    background-color: #28c840;
}

.autosave {
    display: flex;
    align-items: center;
    gap: 12px;
    margin: 0 13px 0 39px;
    color: #dedede;
    font-size: 22px;
    font-weight: 500;
}

.switch {
    position: relative;
    width: 78px;
    height: 30px;
    padding-left: 32px;
    border-radius: 15px;
    background-color: #1c1c1c;
    color: #c4c4c4;
    font-size: 16px;
    font-weight: 600;
    line-height: 30px;
}

.switch input {
    position: absolute;
    inset: 0;
    margin: 0;
    opacity: 0;
}

.knob {
    position: absolute;
    left: 1px;
    top: 2px;
    width: 26px;
    height: 26px;
    border-radius: 50%;
    background-color: #fff;
}

.title {
    display: flex;
    align-items: center;
    gap: 10px;
    margin: 0;
    font-size: 26px;
    font-weight: 700;
}

.dim {
    color: #7a7a7a;
}

/* Ribbon tabs */
.tabs {
    flex: none;
    height: 68px;
    padding: 8px 20px 0 22px;
    display: flex;
    align-items: flex-start;
}

.tabs nav {
    flex: 1;
    display: flex;
    gap: 48px;
    color: #dedede;
    font-size: 26px;
    font-weight: 500;
}

.tabs nav a {
    height: 48px;
    line-height: 42px;
}

.tabs .active {
    border-bottom: 6px solid #e6e6e6;
    border-radius: 3px;
    font-weight: 700;
}

.tabs .tell {
    display: flex;
    align-items: center;
    gap: 18px;
    height: 42px;
    margin-left: -10px;
}

.pill {
    height: 48px;
    margin-left: 20px;
    padding: 0 14px 0 18px;
    gap: 10px;
    border-radius: 8px;
    border-top: 1px solid #757575;
    background-color: #646464;
    color: #e6e6e6;
    font-size: 24px;
    font-weight: 600;
}

/* Ribbon */
.ribbon {
    flex: none;
    display: flex;
    height: 140px;
    font-weight: 500;
}

.group {
    flex: none;
    height: 124px;
    display: flex;
    border-right: 2px solid #4b4b4b;
}

.clipboard {
    width: 210px;
    padding-left: 24px;
}

.font {
    width: 540px;
    padding-left: 20px;
}

.align {
    width: 324px;
    padding-left: 20px;
}

.merge {
    width: 278px;
    padding-left: 24px;
}

.number {
    width: 352px;
    padding-left: 19px;
}

.styles {
    width: 364px;
    padding-left: 20px;
}

.cells {
    width: 194px;
    padding-left: 26px;
}

.editing {
    width: 310px;
    padding-left: 26px;
}

.analyze {
    width: 130px;
    justify-content: center;
}

.sensitivity {
    width: 156px;
    border-right: none;
    justify-content: center;
}

.big {
    flex-direction: column;
    justify-content: flex-start;
    width: 96px;
    line-height: 24px;
    text-align: center;
}

.big-top {
    display: flex;
    align-items: center;
    gap: 14px;
    height: 76px;
    margin-bottom: 5px;
}

.clipboard .big-top {
    gap: 8px;
}

.w120 {
    width: 120px;
}

.w110 {
    width: 110px;
}

.w106 {
    width: 106px;
}

.w90 {
    width: 90px;
}

.stack {
    display: flex;
    flex-direction: column;
    margin: 0 6px;
}

.editing .stack, .cells .stack {
    margin-left: 0;
}

.small {
    height: 44px;
    justify-content: flex-start;
    gap: 12px;
}

.rows {
    flex-direction: column;
    gap: 16px;
    padding-top: 10px;
}

.row {
    display: flex;
    align-items: center;
    height: 48px;
}

.line {
    justify-content: flex-start;
    gap: 12px;
}

.line svg:first-child {
    margin-right: 2px;
}

.select {
    position: relative;
    height: 48px;
}

.select select {
    width: 100%;
    height: 100%;
    padding: 0 12px;
    appearance: none;
    border: 1px solid #444;
    border-bottom: 2px solid #5a5a5a;
    border-radius: 8px;
    background-color: #383838;
    color: #fff;
    font: 500 23px Inter, sans-serif;
}

.select svg {
    position: absolute;
    right: 9px;
    top: 20px;
    pointer-events: none;
}

.wide {
    width: 282px;
    margin-right: 4px;
}

.tiny {
    width: 108px;
    margin-right: 6px;
}

.fmt {
    width: 310px;
}

.sq {
    width: 48px;
    height: 48px;
    margin-right: 4px;
    color: #d6d6d6;
}

.on {
    border-radius: 8px;
    background-color: #4e4e4e;
}

.bold {
    font-size: 28px;
    font-weight: 700;
}

.italic {
    font: italic 28px "Liberation Serif", serif;
}

.underline {
    font-size: 26px;
    font-weight: 300;
    text-decoration: underline;
    text-underline-offset: 5px;
}

.sign {
    font-size: 32px;
    font-weight: 300;
}

.arrow {
    width: 24px;
    height: 48px;
}

.number .arrow {
    width: 20px;
    margin-right: 4px;
}

.vr {
    width: 2px;
    height: 36px;
    margin: 0 14px 0 12px;
    background-color: #4b4b4b;
}

.font .vr {
    margin: 0 14px 0 17px;
}

.font .sq {
    margin-right: 2px;
}

.glyph {
    fill: #d6d6d6;
    font: 300 20px Inter, sans-serif;
}

.digits {
    fill: #d6d6d6;
    font: 300 17px Inter, sans-serif;
    text-anchor: end;
}

/* Formula bar */
.formula-bar {
    flex: none;
    height: 60px;
    display: flex;
    align-items: center;
    border-top: 2px solid #000;
    border-bottom: 6px solid #d9d9d9;
    background-color: #262626;
}

.namebox {
    width: 170px;
    height: 48px;
    margin-right: 30px;
    display: flex;
    align-items: center;
    justify-content: space-between;
    padding-right: 7px;
    border: 3px solid #7b4a7c;
}

.namebox input {
    align-self: flex-start;
    width: 40px;
    height: 28px;
    padding: 0 0 0 2px;
    border: none;
    background-color: #75597a;
    color: #fff;
    font: 22px "Noto Sans", sans-serif;
}

.formula-bar button {
    margin-right: 33px;
}

.fx {
    width: 44px;
    color: #9a9a9a;
    font: italic 34px "Liberation Serif", serif;
}

.formula {
    flex: 1;
    height: 38px;
    border: none;
    background-color: #383838;
}

.formula-bar .expand {
    margin: 0 8px;
}

/* Sheet */
.sheet {
    position: relative;
    flex: 1;
    min-height: 0;
    overflow: hidden;
    background-color: #fff;
}

#grid {
    width: 2930px;
    table-layout: fixed;
    border-collapse: separate;
    border-spacing: 0;
    color: #000;
    font: 21px Lato, "Liberation Sans", sans-serif;
}

#grid td {
    padding: 0 5px 0 4px;
    border-right: 2px solid #d2d2d2;
    border-bottom: 2px solid #d2d2d2;
    line-height: 28px;
    white-space: nowrap;
    vertical-align: bottom;
}

#grid th {
    padding: 0;
    border-right: 2px solid #555;
    border-bottom: 2px solid #555;
    background-color: #161616;
    color: #fff;
    font: 600 20px "Noto Sans", sans-serif;
    line-height: 28px;
    vertical-align: bottom;
}

#grid thead th {
    height: 44px;
    border-bottom-color: #bbb;
    vertical-align: middle;
}

#grid tbody th, #grid .corner {
    border-right-color: #c8c8c8;
}

#grid thead .current {
    border-bottom: 4px solid #1e7145;
    background-color: #555;
}

#grid tbody .current {
    border-right-color: #1e7145;
    background-color: #555;
}

.corner svg {
    margin-left: 10px;
}

.cut {
    height: 18px;
    display: flex;
    align-items: flex-end;
    justify-content: center;
    overflow: hidden;
    line-height: 22px;
}

#grid .num {
    text-align: right;
}

#grid .ask {
    font-weight: 700;
}

#grid .lines {
    line-height: 30px;
}

#grid .top {
    vertical-align: top;
}

#grid .note {
    color: #f00;
}

#grid .fill {
    border-color: #ff3;
    background-color: #ff3;
    box-shadow: -2px -2px 0 #ff3;
    color: #f00;
    font-weight: 700;
}

#grid .answer {
    box-shadow: 0 -2px 0 #ff3;
}

#grid .box {
    border-color: #000;
    box-shadow: none;
}

#grid .box-top {
    box-shadow: 0 -2px 0 #000;
}

#grid .active-cell {
    position: relative;
}

.selection {
    position: absolute;
    inset: -4px;
    border: 4px solid #1e7145;
}

.selection::after {
    content: "";
    position: absolute;
    right: -8px;
    bottom: -8px;
    width: 12px;
    height: 12px;
    border: 1px solid #fff;
    background-color: #1e7145;
}

.hscroll, .vscroll {
    position: absolute;
    border-radius: 7px;
    background-color: rgba(0, 0, 0, 0.2);
}

.hscroll {
    left: 50px;
    right: 50px;
    bottom: 6px;
    height: 14px;
}

.vscroll {
    right: 6px;
    bottom: 18px;
    width: 14px;
    height: 43%;
}

/* Sheet tabs */
.sheet-tabs {
    flex: none;
    height: 52px;
    padding-left: 30px;
    display: flex;
    border-top: 2px solid #666;
    background-color: #313131;
}

.sheet-tabs button {
    width: 14px;
    height: 50px;
    margin-right: 32px;
}

.sheet-tab {
    width: 180px;
    height: 45px;
    margin: -2px 0 0 -1px;
    border-radius: 0 0 6px 6px;
    background-color: #fff;
    color: #21804f;
    font: 700 24px "Liberation Sans", sans-serif;
    line-height: 52px;
    text-align: center;
}

.sheet-tabs .add {
    width: 78px;
    height: 44px;
    margin: 0;
    border-right: 2px solid #5e5e5e;
}

/* Status bar */
.status {
    flex: none;
    height: 46px;
    padding-left: 50px;
    display: flex;
    align-items: center;
    border-top: 1px solid #000;
    background: linear-gradient(#4a4a4a, #3a3a3a);
    font-size: 24px;
}

.access {
    flex: 1;
    display: flex;
    align-items: center;
    gap: 4px;
    margin-left: 38px;
}

.views {
    display: flex;
    align-self: stretch;
    margin-right: 16px;
}

.views button {
    width: 71px;
}

.views .on {
    width: 74px;
    border-radius: 0;
    background-color: #5c5c5c;
}

.status input {
    width: 200px;
    height: 8px;
    margin: 0 14px;
    appearance: none;
    border-radius: 4px;
    background-color: #6e6e6e;
}

.status input::-webkit-slider-thumb {
    appearance: none;
    width: 32px;
    height: 32px;
    border-radius: 50%;
    background-color: #999;
}

.percent {
    width: 110px;
    margin-left: 36px;
    font-size: 24px;
}

/* Screen capture preview */
.capture {
    position: absolute;
    right: 24px;
    bottom: 24px;
    width: 304px;
    height: 196px;
    padding: 7px;
    border: 1px solid #000;
    border-radius: 8px;
    background-color: #000;
    box-shadow: 0 0 70px rgba(0, 0, 0, 0.25);
}

.capture svg {
    width: 100%;
    height: 100%;
    border: 1px solid #fff;
    overflow: hidden;
}
```
FILE: grid.js
```js
const COLS = 27;
const letters = [...'ABCDEFGHIJKLMNOPQRSTUVWXYZ', 'AA'];

// cell: [column, text, classes, colspan, rowspan]
const sheet = {
    35: { h: 90, cells: [['A', '2.17. For the following data, calculate the number of workers required for level production and the resulting month-<br>end inventories. Each worker can produce 15 units per day, and the desired ending inventory is 9000 units.', 'ask lines top', 10]] },
    36: { cells: [['A', 'opening inventory', '', 2], ['C', '11,250', 'num'], ['E', 'Total production', '', 2], ['H', '110,250', 'num fill']] },
    37: { cells: [['A', 'ending inventory', '', 2], ['C', '9,000', 'num'], ['E', 'Daily leveled production', '', 3], ['H', '1470', 'num fill'], ['I', 'Planned, or idealy', 'note', 2]] },
    38: { cells: [['A', 'Month', 'box box-top', 2], ...run('C', ['1', '2', '3', '4'], 'num box box-top'), ['G', 'Total', 'box box-top']] },
    39: { cells: [['A', 'Working Days', 'box', 2], ...run('C', ['20', '24', '12', '19'], 'num box'), ['G', '75', 'num fill box']] },
    40: { cells: [['A', 'Forecast Demand', 'box', 2], ...run('C', ['28,000', '27,500', '28,500', '28,500'], 'num box'), ['G', '112,500', 'num fill box']] },
    41: { cells: [['A', 'Planned Production', 'box', 2], ...run('C', ['29400', '', '', '', ''], 'num fill box')] },
    42: { h: 64, cells: [['A', 'Planned<br>Inventory', 'box lines'], ['B', '11,250', 'num box'], ...run('C', ['', '', '', ''], 'num fill box'), ['G', '', 'box']] },
    43: { cells: [['A', 'Per worker per day', '', 2], ['D', '15', 'num']] },
    44: { cells: [['A', 'Number of workers needed', '', 3], ['D', '98', 'num fill']] },
    45: { cells: [['A', 'Actual daily production', '', 2], ['D', '1470', 'num fill'], ['E', 'Actual', 'note']] },
    47: { h: 96, cells: [['A', '2.18. For the following data, calculate the number of workers required for level production and the resulting month-<br>end inventories. Each worker can produce 9 units per day, and the desired ending inventory is 800 units. Why is it not<br>possible to reach the exact ending inventory target?', 'ask lines top', 10]] },
    48: { cells: [['A', 'opening inventory', '', 2], ['C', '1,000', 'num'], ['E', 'Total production', '', 2], ['H', '17,700', 'num fill']] },
    49: { cells: [['A', 'ending inventory', '', 2], ['C', '800', 'num'], ['E', 'Daily leveled production', '', 3], ['H', '151.2821', 'num fill'], ['I', 'Planned', '']] },
    50: { cells: [['A', 'Month', 'box box-top', 2], ...run('C', ['1', '2', '3', '4', '5', '6'], 'num box box-top'), ['I', 'Total', 'box box-top']] },
    51: { cells: [['A', 'Working Days', 'box', 2], ...run('C', ['20', '24', '12', '22', '20', '19'], 'num box'), ['I', '117', 'num fill box']] },
    52: { cells: [['A', 'Forecast Demand', 'box', 2], ...run('C', ['2,800', '3,000', '2,700', '3,300', '2,900', '3,200'], 'num box'), ['I', '17,900', 'num fill box']] },
    53: { cells: [['A', 'Planned Production', 'box', 2], ...run('C', ['3060', '3672', '1836', '3366', '3060', '2907', ''], 'num fill box')] },
    54: { h: 64, cells: [['A', 'Planned<br>Inventory', 'box lines'], ['B', '1,000', 'num box'], ...run('C', ['1,260', '1,932', '1,068', '1,134', '1,294', '1,001'], 'num fill box'), ['I', '', 'box'], ['J', '<div class="selection"></div>', 'active-cell']] },
    55: { cells: [['A', 'Per worker per day', '', 2], ['D', '9', 'num']] },
    56: { cells: [['A', 'Number of workers needed', '', 3], ['D', '17', 'num fill']] },
    57: { cells: [['A', 'Actual daily production', '', 2], ['D', '153', 'num fill']] },
    58: { cells: [['A', 'Why is it not possible to reach the exact ending inventory target?', 'ask', 6]] },
    59: { cells: [['A', '', 'fill answer', 11, 2]] },
    60: { skip: 11, cells: [] }
};

function run(start, values, cls) {
    const from = letters.indexOf(start);
    return values.map((v, i) => [letters[from + i], v, cls]);
}

function buildRow(n) {
    const row = sheet[n] || { cells: [] };
    const height = n === 33 ? 20 : row.h || 30;
    const label = n === 33 ? '<div class="cut">33</div>' : n;
    let html = `<tr style="height:${height}px"><th scope="row"${n === 54 ? ' class="current"' : ''}>${label}</th>`;
    let col = row.skip || 0;
    while (col < COLS) {
        const cell = row.cells.find(c => c[0] === letters[col]);
        if (cell) {
            const [, text, cls, span = 1, down = 1] = cell;
            html += `<td class="${cls}" colspan="${span}" rowspan="${down}">${text}</td>`;
            col += span;
        } else {
            html += '<td></td>';
            col++;
        }
    }
    return html + '</tr>';
}

let head = '<colgroup><col style="width:46px"><col style="width:128px">' + '<col style="width:106px">'.repeat(COLS - 1) + '</colgroup>';
head += '<thead><tr><th class="corner"><svg width="30" height="30" viewBox="0 0 30 30" fill="#555"><path d="M30 0v30H0z"/></svg></th>';
letters.forEach(l => head += `<th scope="col"${l === 'J' ? ' class="current"' : ''}>${l}</th>`);
head += '</tr></thead><tbody>';

let body = '';
for (let n = 33; n <= 69; n++) body += buildRow(n);
document.getElementById('grid').innerHTML = head + body + '</tbody>';

// faint gridlines in the preview
let lines = '';
for (let x = 232; x < 1042; x += 32) lines += `M${x} 241v384`;
for (let y = 250; y < 625; y += 9) lines += `M194 ${y}h848`;
document.getElementById('captureGrid').innerHTML = `<path d="${lines}" stroke="#e8e8e8"/>`;
```
